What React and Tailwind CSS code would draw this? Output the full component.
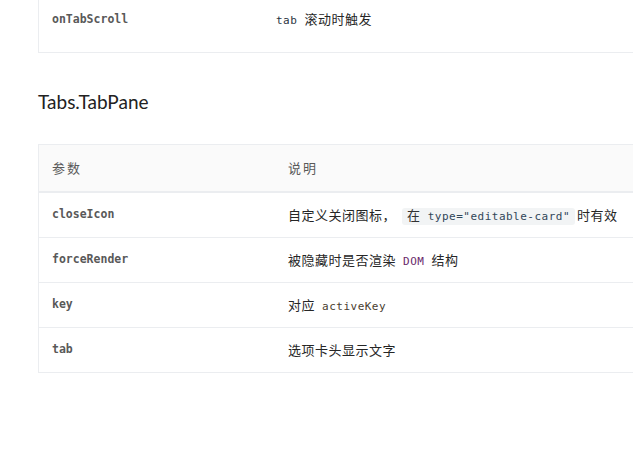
const mono = "font-['DejaVu_Sans_Mono','Liberation_Mono',monospace]";
const zh = "font-['Noto_Sans_CJK_SC','Noto_Sans',sans-serif]";
const code = `mx-[7px] text-[11px] ${mono}`;

const rows = [
  {
    name: "closeIcon",
    desc: (
      <>
        自定义关闭图标，
        <code className={`ml-[6px] mr-[2px] rounded-[3px] bg-[#f2f4f5] px-[5px] py-[2px] text-[11px] text-[#314659] ${mono}`}>
          <span className={`text-[13px] text-[#333] ${zh}`}>在</span> type="editable-card"
        </code>
        时有效
      </>
    ),
  },
  {
    name: "forceRender",
    desc: (
      <>
        被隐藏时是否渲染<span className={`${code} text-[#6b2a6b]`}>DOM</span>结构
      </>
    ),
  },
  {
    name: "key",
    desc: (
      <>
        对应<span className={`${code} text-[#4a4030]`}>activeKey</span>
      </>
    ),
  },
  { name: "tab", desc: "选项卡头显示文字" },
];

export default function App() {
  return (
    <div className={`h-[449px] w-[633px] overflow-hidden bg-white text-[13px] text-[#262626] ${zh}`}>
      <div className="ml-[38px] w-[620px] border-b border-l border-[#ebedf0]">
        <div className="flex h-[52px]">
          <div className={`w-[224px] shrink-0 pl-[13px] pt-[9px] text-[11.5px] font-bold leading-5 text-[#595959] ${mono}`}>
            onTabScroll
          </div>
          <div className="pl-[13px] pt-[9px] leading-5 tracking-[0.5px]">
            <span className={`mr-[7px] text-[11px] text-[#2a3340] ${mono}`}>tab</span>滚动时触发
          </div>
        </div>
      </div>

      <h2 className="ml-[38px] mt-[37px] font-['Lato','Open_Sans',sans-serif] text-[19px] leading-6 text-[#222]">
        Tabs.TabPane
      </h2>

      <div className="ml-[38px] mt-[30px] w-[620px] border-l border-t border-[#ebedf0]">
        <div className="flex h-[48px] items-center border-b-2 border-[#ebedf0] bg-[#fafafa] text-[#595959]">
          <div className="w-[236px] shrink-0 pl-[13px] tracking-[2px]">参数</div>
          <div className="pl-[13px] tracking-[2px]">说明</div>
        </div>
        {rows.map((r) => (
          <div key={r.name} className="flex h-[45px] items-center border-b border-[#ebedf0]">
            <div className={`w-[236px] shrink-0 pl-[13px] text-[11.5px] font-bold text-[#595959] ${mono}`}>{r.name}</div>
            <div className="pl-[13px] tracking-[0.5px]">{r.desc}</div>
          </div>
        ))}
      </div>
    </div>
  );
}
